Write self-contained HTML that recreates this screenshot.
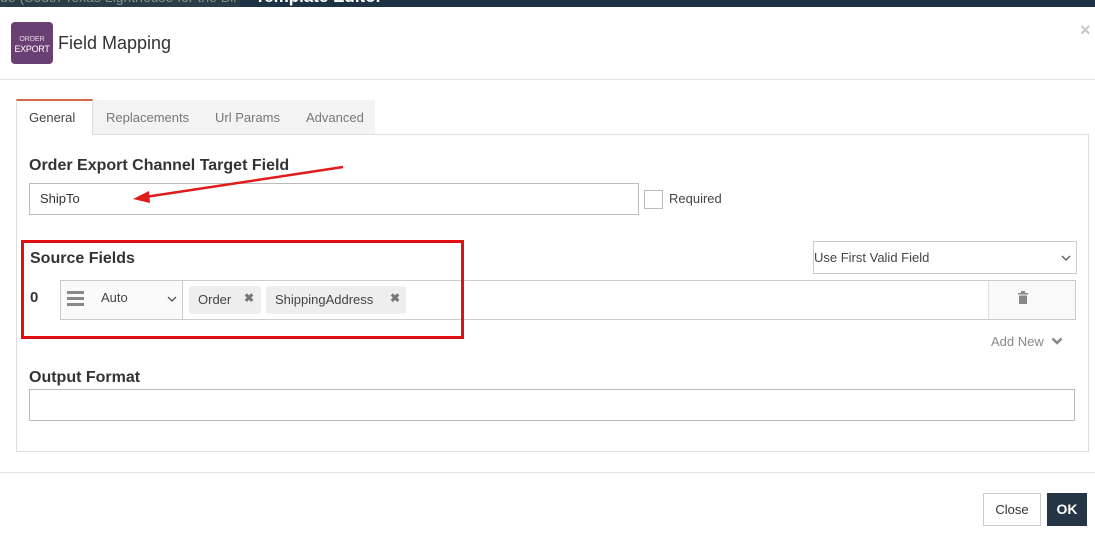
<!DOCTYPE html>
<html><head><style>
*{box-sizing:border-box;margin:0;padding:0}
body{width:1095px;height:539px;position:relative;background:#fff;font-family:"Liberation Sans",sans-serif;color:#333;overflow:hidden}
.a{position:absolute}
.lbl{font-weight:bold;font-size:16px;color:#333}
.tab{position:absolute;top:110px;font-size:13px;color:#777}
</style></head><body>
<div class="a" style="left:0;top:0;width:1095px;height:7px;background:#1e3245"></div>
<div class="a" style="left:0;top:0;width:240px;height:7px;background:#2a3c48;overflow:hidden"><span style="position:absolute;top:-11px;left:0;font-size:14px;color:#7f968f;white-space:nowrap">de (South Texas Lighthouse for the Bli</span></div>
<div class="a" style="left:255px;top:-13px;font-size:17px;font-weight:bold;color:#fff;white-space:nowrap">Template Editor</div>
<div class="a" style="left:11px;top:22px;width:42px;height:42px;background:#6a3f73;border-radius:4px;color:#e8dcea;text-align:center;overflow:hidden">
<div style="font-size:7px;margin-top:14px;line-height:8px">ORDER</div><div style="font-size:9px;line-height:10px;color:#fff;letter-spacing:-0.3px">EXPORT</div></div>
<div class="a" style="left:58px;top:33px;font-size:18px;color:#333">Field Mapping</div>
<div class="a" style="left:1080px;top:20px;font-size:18px;color:#c8c8c8;font-weight:bold">×</div>
<div class="a" style="left:0;top:79px;width:1095px;height:1px;background:#e5e5e5"></div>
<div class="a" style="left:93px;top:100px;width:282px;height:34px;background:#f3f3f3"></div>
<div class="a" style="left:16px;top:99px;width:77px;height:36px;background:#fff;border-top:2px solid #d4694a;border-left:1px solid #ddd;border-right:1px solid #ddd"></div>
<div class="tab" style="left:29px;color:#444">General</div>
<div class="tab" style="left:106px">Replacements</div>
<div class="tab" style="left:215px">Url Params</div>
<div class="tab" style="left:306px">Advanced</div>
<div class="a" style="left:16px;top:134px;width:1073px;height:318px;border:1px solid #ddd;border-top:none"></div>
<div class="a" style="left:93px;top:134px;width:996px;height:1px;background:#ddd"></div>
<div class="a lbl" style="left:29px;top:157px">Order Export Channel Target Field</div>
<div class="a" style="left:29px;top:183px;width:610px;height:32px;border:1px solid #bbb"></div>
<div class="a" style="left:40px;top:191px;font-size:13px">ShipTo</div>
<div class="a" style="left:644px;top:190px;width:19px;height:19px;border:1px solid #bbb"></div>
<div class="a" style="left:669px;top:191px;font-size:13px;color:#444">Required</div>
<svg class="a" style="left:0;top:0" width="1095" height="539"><line x1="343" y1="167" x2="145" y2="197" stroke="#e01b1b" stroke-width="2.5"/><polygon points="133,199 149,191 150,203" fill="#e01b1b"/></svg>
<div class="a lbl" style="left:30px;top:250px">Source Fields</div>
<div class="a" style="left:813px;top:241px;width:264px;height:33px;border:1px solid #ccc"></div>
<div class="a" style="left:814px;top:250px;font-size:13px;color:#444">Use First Valid Field</div>
<svg class="a" style="left:1061px;top:254px" width="10" height="8"><path d="M1 2l4 4 4-4" fill="none" stroke="#555" stroke-width="1.3"/></svg>
<div class="a" style="left:30px;top:289px;font-weight:bold;font-size:15px">0</div>
<div class="a" style="left:60px;top:280px;width:1016px;height:40px;border:1px solid #ccc"></div>
<div class="a" style="left:61px;top:281px;width:122px;height:38px;background:#fafafa;border-right:1px solid #ccc"></div>
<div class="a" style="left:67px;top:291px;width:17px;height:3px;background:#888;box-shadow:0 6px 0 #888,0 12px 0 #888"></div>
<div class="a" style="left:101px;top:290px;font-size:13px;color:#444">Auto</div>
<svg class="a" style="left:167px;top:295px" width="10" height="8"><path d="M1 2l4 4 4-4" fill="none" stroke="#555" stroke-width="1.3"/></svg>
<div class="a" style="left:189px;top:286px;width:72px;height:28px;background:#eee;border-radius:3px"></div>
<div class="a" style="left:198px;top:292px;font-size:13px;color:#444">Order</div>
<div class="a" style="left:244px;top:291px;font-size:12px;color:#777;font-weight:bold">✖</div>
<div class="a" style="left:266px;top:286px;width:140px;height:28px;background:#eee;border-radius:3px"></div>
<div class="a" style="left:275px;top:292px;font-size:13px;color:#444">ShippingAddress</div>
<div class="a" style="left:390px;top:291px;font-size:12px;color:#777;font-weight:bold">✖</div>
<div class="a" style="left:988px;top:281px;width:87px;height:38px;background:#f9f9f9;border-left:1px solid #ddd"></div>
<svg class="a" style="left:1017px;top:291px" width="12" height="14"><rect x="1" y="2" width="10" height="1.5" fill="#888"/><rect x="4" y="0" width="4" height="2" fill="#888"/><rect x="2" y="4.5" width="8" height="8.5" fill="#888"/></svg>
<div class="a" style="left:21px;top:240px;width:443px;height:99px;border:3px solid #e01010"></div>
<div class="a" style="left:991px;top:334px;font-size:13px;color:#888">Add New</div>
<svg class="a" style="left:1051px;top:336px" width="12" height="10"><path d="M1.5 2.5l4.5 4.5 4.5-4.5" fill="none" stroke="#888" stroke-width="2.5"/></svg>
<div class="a lbl" style="left:29px;top:369px">Output Format</div>
<div class="a" style="left:29px;top:389px;width:1046px;height:32px;border:1px solid #bbb"></div>
<div class="a" style="left:0;top:472px;width:1095px;height:1px;background:#e5e5e5"></div>
<div class="a" style="left:983px;top:493px;width:58px;height:33px;border:1px solid #ccc;font-size:13px;text-align:center;line-height:31px;color:#333">Close</div>
<div class="a" style="left:1047px;top:493px;width:40px;height:33px;background:#253545;color:#fff;font-size:14px;font-weight:bold;text-align:center;line-height:33px">OK</div>
</body></html>
